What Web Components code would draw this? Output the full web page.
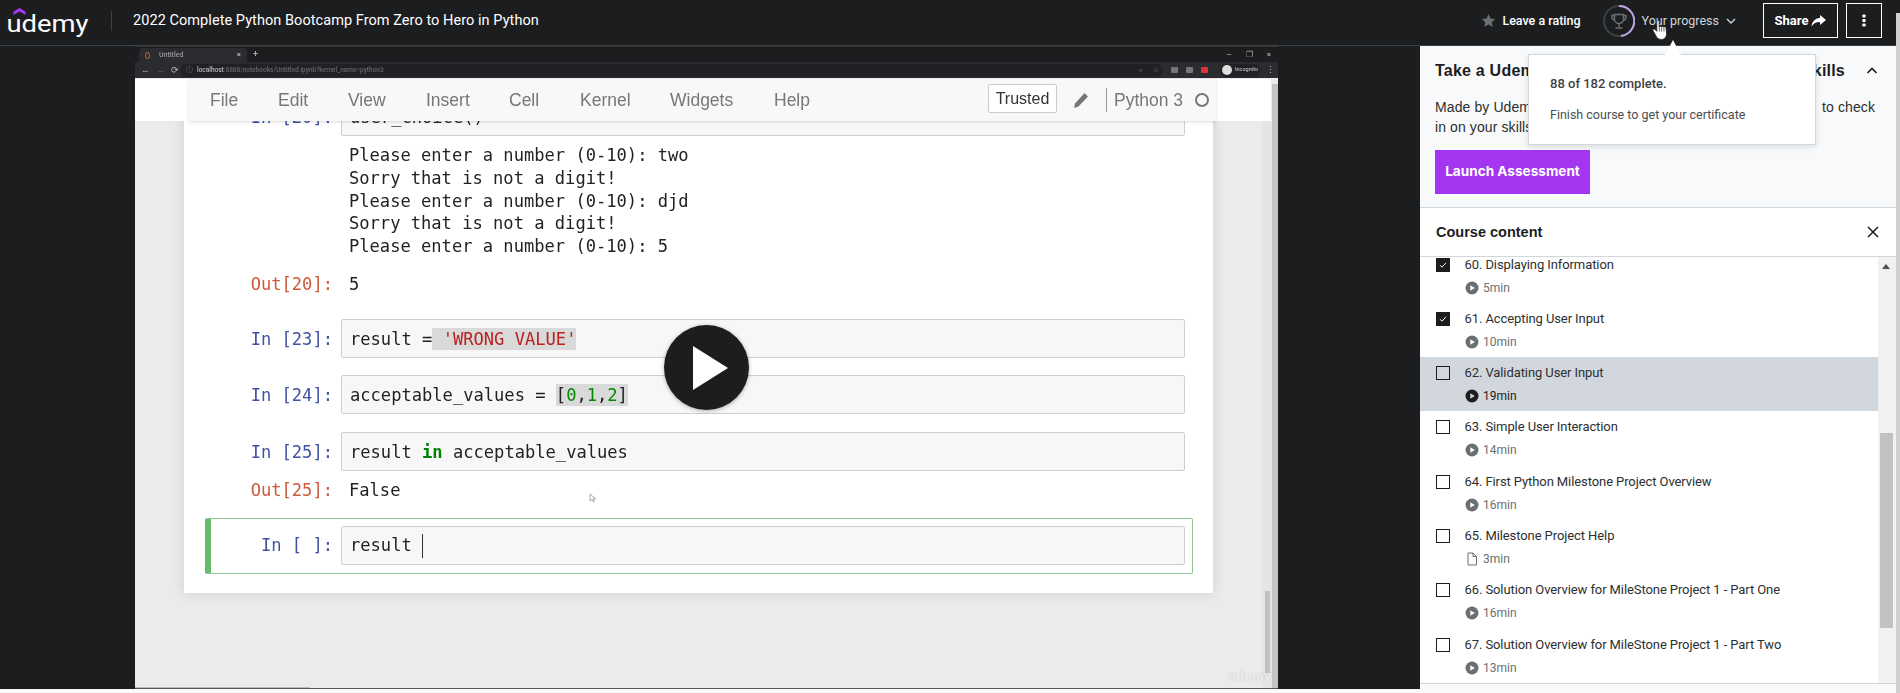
<!DOCTYPE html>
<html lang="en">
<head>
<meta charset="utf-8">
<title>Udemy course player</title>
<style>
  html,body{margin:0;height:693px;overflow:hidden;background:#fff}
  body{display:flex;flex-direction:column;font-family:Roboto,"Liberation Sans",sans-serif}
  .main{display:flex;height:647px}
</style>
</head>
<body>
<course-header></course-header>
<div class="main">
  <video-stage></video-stage>
  <course-sidebar></course-sidebar>
</div>
<hand-cursor></hand-cursor>
<script>
'use strict'
class CourseHeader extends HTMLElement {
  constructor () {
    super()
    this.attachShadow({mode:'open'})
    this.shadowRoot.innerHTML = `
    <style>
      :host{display:flex;align-items:center;height:41px;padding-bottom:4px;background:#1c1d1f;border-bottom:1px solid #3e4143;color:#fff;flex:none;position:relative;z-index:3;padding-right:18px}
      .logo{width:84px;height:36px;margin-left:6px;flex:none}
      .sep{width:1px;height:20px;background:#3e4143;margin-left:21px;margin-right:21px}
      h1{font:400 14.500px/20px Roboto,sans-serif;margin:0;letter-spacing:.06px;flex:1;white-space:nowrap}
      .rate{display:flex;align-items:center;font:500 12.500px/20px Roboto,sans-serif;margin-right:22px;gap:6px}
      .prog{display:flex;align-items:center;font:400 12.500px/20px Roboto,sans-serif;color:#d1d7dc;margin-right:26px;gap:7px}
      .btn{height:35px;box-sizing:border-box;border:1px solid #fff;display:flex;align-items:center;justify-content:center;font:700 13px Roboto,sans-serif;gap:3px}
      .share{width:75px;margin-right:8px}
      .more{width:36px}
      .edge{position:absolute;right:0;top:13px;bottom:-1px;width:4px;background:#d0d0d0}
    </style>
    <svg class="logo" viewBox="0 0 84 36">
      <path d="M7.500 5 L13.500 1.500 L19.500 5 V8.500 L13.500 5 L7.500 8.500 Z" fill="#a435f0" transform="translate(0 3.500)"/>
      <text x="0.500" y="29" font-family="Roboto,sans-serif" font-size="24" font-weight="400" fill="#fff" textLength="82" lengthAdjust="spacingAndGlyphs">udemy</text>
    </svg>
    <div class="sep"></div>
    <h1>2022 Complete Python Bootcamp From Zero to Hero in Python</h1>
    <div class="rate">
      <svg width="15" height="15" viewBox="0 0 24 24"><path fill="#6a6f73" d="M12 1.500l3.200 7.100 7.700.8-5.800 5.200 1.700 7.600-6.800-3.900-6.800 3.900 1.700-7.600L1.100 9.400l7.700-.8z"/></svg>
      <span>Leave a rating</span>
    </div>
    <div class="prog">
      <svg width="32" height="32" viewBox="0 0 32 32">
        <circle cx="16" cy="16" r="15" fill="none" stroke="#3e4143" stroke-width="2"/>
        <path d="M16 1 A15 15 0 0 1 18 30.900" fill="none" stroke="#c0a6e8" stroke-width="2"/>
        <path d="M11.500 9.500h9v4.500a4.500 4.500 0 0 1-9 0zM16 18.500v3.500M12.500 23h7M11.500 10.500H9v1.800a3 3 0 0 0 3 3M20.500 10.500H23v1.800a3 3 0 0 1-3 3" fill="none" stroke="#6a6f73" stroke-width="1.500"/>
      </svg>
      <span>Your progress</span>
      <svg width="12" height="12" viewBox="0 0 12 12" style="margin-left:-1px"><path d="M2 4l4 4 4-4" fill="none" stroke="#d1d7dc" stroke-width="1.300"/></svg>
    </div>
    <div class="btn share"><span>Share</span>
      <svg width="15" height="12" viewBox="0 0 15 12"><path fill="#fff" d="M9 0l6 5-6 5V7C5 7 2.500 8.200 .5 11.500 1 7 3.500 3.300 9 3z"/></svg>
    </div>
    <div class="btn more">
      <svg width="4" height="13" viewBox="0 0 4 13"><rect x=".4" y=".4" width="3.200" height="3.200" rx=".8" fill="#fff"/><rect x=".4" y="4.900" width="3.200" height="3.200" rx=".8" fill="#fff"/><rect x=".4" y="9.400" width="3.200" height="3.200" rx=".8" fill="#fff"/></svg>
    </div>
    <div class="edge"></div>
    <progress-popover></progress-popover>`
  }
}

class ProgressPopover extends HTMLElement {
  constructor () {
    super()
    this.attachShadow({mode:'open'})
    this.shadowRoot.innerHTML = `
    <style>
      :host{position:absolute;left:1528px;top:54px;width:288px;height:91px;box-sizing:border-box;background:#fff;border:1px solid #d1d7dc;box-shadow:0 2px 6px rgba(0,0,0,.12);color:#2d2f31;padding:20px 21px}
      :host::before{content:"";position:absolute;left:136px;top:-15px;width:16px;height:15px;background:#fff;clip-path:polygon(50% 0,100% 100%,0 100%)}
      b{display:block;font:500 13px/18px Roboto,sans-serif;position:relative;color:#3e4143}
      p{margin:13px 0 0;font:400 12.500px/18px Roboto,sans-serif;color:#4a4d50}
    </style>
    <b>88 of 182 complete.</b>
    <p>Finish course to get your certificate</p>`
  }
}

class VideoStage extends HTMLElement {
  constructor () {
    super()
    this.attachShadow({mode:'open'})
    this.shadowRoot.innerHTML = `
    <style>
      :host{display:flex;flex-direction:column;width:1420px;background:#1c1d1f;flex:none;position:relative}
      .frame{margin:0 142px 0 135px;height:642px;display:flex;flex-direction:column;position:relative;overflow:hidden;border-bottom:1px solid #555;box-sizing:content-box}
      .strip{height:4px;background:#fafafa;flex:none}
      .seek{position:absolute;left:0;bottom:0;width:175px;height:1px;background:#bbb}
      .play{position:absolute;left:529px;top:279px;width:85px;height:85px;border-radius:50%;background:#1c1d1f;box-shadow:0 1px 4px rgba(0,0,0,.3);z-index:4}
      .play svg{position:absolute;left:29px;top:21px}
      .mark{position:absolute;right:7px;bottom:4px;font:700 14px Roboto,sans-serif;color:rgba(255,255,255,.8);text-shadow:0 0 1px #aaa;z-index:4}
    </style>
    <div class="frame">
      <browser-chrome></browser-chrome>
      <jupyter-page></jupyter-page>
      <div class="seek"></div>
      <div class="play"><svg width="36" height="44" viewBox="0 0 36 44"><path d="M0 0L35 22 0 44z" fill="#fff"/></svg></div>
      <span class="mark">udemy</span>
    </div>
    <div class="strip"></div>`
  }
}

class BrowserChrome extends HTMLElement {
  constructor () {
    super()
    this.attachShadow({mode:'open'})
    this.shadowRoot.innerHTML = `
    <style>
      :host{display:block;flex:none;filter:blur(.6px);font:500 7px/1 Roboto,sans-serif;color:#999}
      .tabs{height:16px;background:#1c1d1f;display:flex;align-items:flex-end;padding-left:4px;border-top:1px solid #333;box-sizing:border-box}
      .tab{width:108px;height:14px;background:#2b2c2f;border-radius:4px 4px 0 0;display:flex;align-items:center;gap:9px;padding-left:6px;box-sizing:border-box}
      .dot{width:5px;height:7px;border-radius:50%;border:1px solid #a8603a;box-sizing:border-box}
      .t{flex:1}.x{margin-right:6px;font-size:8px;color:#bbb}
      .plus{margin:0 0 3px 6px;font-size:9px;color:#aaa}
      .ctl{margin-left:auto;display:flex;gap:14px;padding-right:7px;margin-bottom:3px;font-size:8px;color:#aaa}
      .bar{height:16px;background:#2b2c2f;display:flex;align-items:center;padding:0 6px;gap:6px;font-size:9px;color:#bbb}
      .pill{flex:none;width:983px;height:13px;border-radius:7px;background:#202124;display:flex;align-items:center;padding:0 4px 0 6px;gap:4px;margin-left:-5px;font-size:6.500px;color:#666;box-sizing:border-box}
      .pill b{color:#bbb;font-weight:500}
      .pill em{font-style:normal;color:#888;font-size:7px}
      .pill em:first-of-type{margin-left:auto;margin-right:6px}
      .inc{height:13px;border-radius:7px;background:#202124;display:flex;align-items:center;gap:3px;padding:0 5px 0 2px;font-size:5.500px;margin-left:6px;width:40px;box-sizing:border-box}
      .av{width:10px;height:10px;border-radius:50%;background:#ddd;flex:none}
      .i{width:7px;height:6px;border-radius:1px;background:#777;margin-left:2px;flex:none}
      .r{background:#d33}
    </style>
    <div class="tabs">
      <div class="tab"><i class="dot"></i><span class="t">Untitled</span><span class="x">×</span></div>
      <span class="plus">+</span>
      <div class="ctl"><span>–</span><span>❐</span><span>×</span></div>
    </div>
    <div class="bar">
      <span>←</span><span style="color:#666">→</span><span>⟳</span>
      <div class="pill"><span>ⓘ</span><span><b>localhost</b>:8888/notebooks/Untitled.ipynb?kernel_name=python3</span><em>⌕</em><em>☆</em></div>
      <i class="i"></i><i class="i"></i><i class="i r"></i>
      <div class="inc"><i class="av"></i><span>Incognito</span></div>
      <span>⋮</span>
    </div>`
  }
}

class JupyterPage extends HTMLElement {
  constructor () {
    super()
    this.attachShadow({mode:'open'})
    this.shadowRoot.innerHTML = `
    <style>
      :host{display:flex;flex-direction:column;flex:1;min-height:0;background:#ebebeb;position:relative;filter:blur(.5px);overflow:hidden}
      .menu{height:42px;margin-top:1px;background:#fff;flex:none;position:relative;z-index:2;display:flex;padding:0 55px 0 54px;margin-right:7px}
      .inner{flex:1;background:#f8f8f8;box-shadow:0 1px 3px rgba(0,0,0,.14);display:flex;align-items:center;font:400 17.500px "Liberation Sans",sans-serif;color:#777;position:relative}
      .inner span.m{position:absolute}
      .trusted{position:absolute;left:799px;top:5px;width:69px;height:29px;box-sizing:border-box;border:1px solid #ccc;background:#fff;border-radius:2px;font-size:16px;color:#333;display:flex;align-items:center;justify-content:center}
      .pen{position:absolute;left:884px;top:13px}
      .div{position:absolute;left:917px;top:9px;width:1px;height:24px;background:#999}
      .kern{position:absolute;left:925px;top:11px}
      .ring{position:absolute;left:1006px;top:14px;width:14px;height:14px;border:2px solid #777;border-radius:50%;box-sizing:border-box}
      .scroll{position:absolute;right:0;top:6px;bottom:0;width:6px;background:#c4c4c4}
      .inner-s{position:absolute;right:8px;bottom:15px;width:5px;height:82px;background:#c0c0c0}
      .sh{position:absolute;right:6px;top:43px;bottom:0;width:10px;background:#e4e4e4}
      .page{width:1029px;margin:-24px 0 0 49px;height:496px;box-sizing:border-box;flex:none;background:#fff;box-shadow:0 0 12px rgba(0,0,0,.12);position:relative;z-index:1}
      .r{display:grid;grid-template-columns:149px 844px;column-gap:8px}
      .p{font:17.100px/22.750px "DejaVu Sans Mono",monospace;text-align:right;white-space:pre;align-self:center}
      .in{color:#3f51a0;padding-top:2px}.out{color:#cc5a3a}
      .box{height:39px;box-sizing:border-box;border:1px solid #cfcfcf;background:#f7f7f7;border-radius:2px;display:flex;align-items:center;padding:1px 0 0 8px;font:17.100px/22.750px "DejaVu Sans Mono",monospace;color:#222;white-space:pre}
      .txt{font:17.100px/22.750px "DejaVu Sans Mono",monospace;color:#222;white-space:pre;padding-left:8px}
      .hl{background:#d9d9d9}
      .s{color:#ba2121}.n{color:#080}.k{color:#008000;font-weight:700}
      .sel{margin:0 20px 0 21px;height:56px;box-sizing:border-box;border:1px solid #8fc493;border-left:6px solid #66bb6a;border-radius:2px;display:grid;grid-template-columns:122px 844px;column-gap:8px;align-items:center}
      .sel .in,.sel .box{padding-top:0}
      .cur{display:inline-block;width:1.500px;height:24px;background:#333;margin-left:10px}
      .arrow{position:absolute;left:405px;top:396px}
    </style>
    <div class="menu"><div class="inner">
      <span class="m" style="left:21px">File</span><span class="m" style="left:89px">Edit</span><span class="m" style="left:159px">View</span><span class="m" style="left:237px">Insert</span><span class="m" style="left:320px">Cell</span><span class="m" style="left:391px">Kernel</span><span class="m" style="left:481px">Widgets</span><span class="m" style="left:585px">Help</span>
      <div class="trusted">Trusted</div>
      <svg class="pen" width="16" height="17" viewBox="0 0 16 17"><path fill="#777" d="M11.500 1l3.500 3.500-9.500 10L1 16l1-4.500z"/></svg>
      <div class="div"></div><span class="kern">Python 3</span><div class="ring"></div>
    </div></div>
    <div class="scroll"></div><div class="sh"></div><div class="inner-s"></div>
    <div class="page">
      <div class="r"><div class="p in">In [20]:</div><div class="box">user_choice()</div></div>
      <div class="r" style="margin-top:8px"><div></div><div class="txt">Please enter a number (0-10): two
Sorry that is not a digit!
Please enter a number (0-10): djd
Sorry that is not a digit!
Please enter a number (0-10): 5</div></div>
      <div class="r" style="margin-top:15px"><div class="p out">Out[20]:</div><div class="txt">5</div></div>
      <div class="r" style="margin-top:23.500px"><div class="p in">In [23]:</div><div class="box"><span>result =</span><span class="hl"> <span class="s">'WRONG VALUE'</span></span></div></div>
      <div class="r" style="margin-top:17px"><div class="p in">In [24]:</div><div class="box"><span>acceptable_values = </span><span class="hl">[<span class="n">0</span>,<span class="n">1</span>,<span class="n">2</span>]</span></div></div>
      <div class="r" style="margin-top:18px"><div class="p in">In [25]:</div><div class="box">result <span class="k">in</span> acceptable_values</div></div>
      <div class="r" style="margin-top:8px"><div class="p out">Out[25]:</div><div class="txt">False</div></div>
      <div class="sel" style="margin-top:16px"><div class="p in">In [ ]:</div><div class="box">result<i class="cur"></i></div></div>
      <svg class="arrow" width="7" height="10" viewBox="0 0 7 10"><path d="M1 1v7l2-1.600 1.500 2.600 1-.6L4 5.800h2.500z" fill="#fff" stroke="#888" stroke-width=".7"/></svg>
    </div>`
  }
}

class CourseSidebar extends HTMLElement {
  constructor () {
    super()
    this.attachShadow({mode:'open'})
    this.shadowRoot.innerHTML = `
    <style>
      :host{display:flex;flex-direction:column;width:480px;height:647px;background:#fff;box-sizing:border-box;border-right:4px solid #d0d0d0;flex:none;color:#1c1d1f;position:relative}
      .assess{height:162px;background:#f7f9fa;box-sizing:border-box;padding:14px 15px;border-bottom:1px solid #d1d7dc;position:relative;flex:none}
      .line{display:flex;justify-content:space-between;width:440px}
      .line .l{width:93px;overflow:hidden;white-space:nowrap}
      .line .rt{white-space:nowrap}
      h2.line{margin:0;font:700 16px/22px "Liberation Sans",sans-serif;letter-spacing:.22px;width:410px}
      .hide{width:29px;overflow:hidden;display:flex;justify-content:flex-end}
      .up{position:absolute;right:17px;top:20px}
      .assess p{margin:15px 0 0;font:400 14px/20px "Liberation Sans",sans-serif;color:#2d2f31;letter-spacing:.1px}
      .launch{margin-top:13px;width:155px;height:44px;background:#a435f0;color:#fff;font:700 13.600px/43px Inter,sans-serif;text-align:center}
      .cc{height:49px;flex:none;display:flex;align-items:center;justify-content:space-between;padding:0 16px;border-bottom:1px solid #d1d7dc;font:700 14.500px "Liberation Sans",sans-serif;box-sizing:border-box}
      .list{flex:1;min-height:0;display:flex;position:relative}
      .rows{flex:1;overflow:hidden;display:flex;flex-direction:column;min-width:0}
      .first{margin-top:-8px}
      .next{margin-top:1px}
      .sb{width:18px;background:#f1f1f1;position:relative;flex:none}
      .sb i{position:absolute;left:4px;top:7px;border:4.500px solid transparent;border-top:0;border-bottom:5px solid #505050}
      .sb b{position:absolute;left:2px;top:176px;width:13px;height:195px;background:#c1c1c1}
      .foot{height:10px;flex:none;background:#f7f9fa;border-top:1px solid #d1d7dc;box-sizing:border-box}
    </style>
    <section class="assess">
      <h2 class="line"><span class="l">Take a Udemy</span><span class="rt hide">skills</span></h2>
      <svg class="up" width="14" height="10" viewBox="0 0 14 10"><path d="M2.500 7L7 2.500 11.500 7" fill="none" stroke="#1c1d1f" stroke-width="1.600"/></svg>
      <p><span class="line"><span class="l">Made by Udemy</span><span class="rt">to check</span></span><span class="line"><span class="l">in on your skills</span></span></p>
      <div class="launch">Launch Assessment</div>
    </section>
    <div class="cc"><span>Course content</span>
      <svg width="14" height="14" viewBox="0 0 14 14"><path d="M2 2l10 10M12 2L2 12" stroke="#1c1d1f" stroke-width="1.500"/></svg>
    </div>
    <div class="list">
      <div class="rows">
        <lecture-row class="first" done title-text="60. Displaying Information" time="5min"></lecture-row>
        <lecture-row done title-text="61. Accepting User Input" time="10min"></lecture-row>
        <lecture-row active title-text="62. Validating User Input" time="19min"></lecture-row>
        <lecture-row title-text="63. Simple User Interaction" time="14min"></lecture-row>
        <lecture-row class="next" title-text="64. First Python Milestone Project Overview" time="16min"></lecture-row>
        <lecture-row doc title-text="65. Milestone Project Help" time="3min"></lecture-row>
        <lecture-row title-text="66. Solution Overview for MileStone Project 1 - Part One" time="16min"></lecture-row>
        <lecture-row title-text="67. Solution Overview for MileStone Project 1 - Part Two" time="13min" style="padding-top:10px"></lecture-row>
      </div>
      <div class="sb"><i></i><b></b></div>
    </div>
    <div class="foot"></div>`
  }
}

class LectureRow extends HTMLElement {
  constructor () {
    super()
    this.attachShadow({mode:'open'})
  }
  connectedCallback(){
    const done = this.hasAttribute('done')
    const active = this.hasAttribute('active')
    const iconColor = active ? '#1c1d1f' : '#6a6f73'
    const icon = this.hasAttribute('doc')
      ? `<svg width="14" height="14" viewBox="0 0 14 14"><path d="M3 1h5l3.500 3.500V13H3zM8 1v3.500h3.500" fill="none" stroke="${iconColor}" stroke-width="1"/></svg>`
      : `<svg width="14" height="14" viewBox="0 0 14 14"><circle cx="7" cy="7" r="6.500" fill="${iconColor}"/><path d="M5.300 4.200L9.800 7 5.300 9.800z" fill="${active ? '#d1d7dc' : '#fff'}"/></svg>`
    const check = done ? `<svg width="10" height="10" viewBox="0 0 10 10"><path d="M2 5.200l2 2 4-4.400" fill="none" stroke="#fff" stroke-width="1"/></svg>` : ''
    this.shadowRoot.innerHTML = `
    <style>
      :host{display:grid;flex:none;grid-template-columns:14px 1fr;column-gap:14.500px;height:54px;padding:9px 0 0 16px;box-sizing:border-box;background:${active ? '#d1d7dc' : '#fff'};color:#2d2f31}
      .cb{width:14px;height:14px;box-sizing:border-box;border:1px solid #1c1d1f;background:${done ? '#1c1d1f' : (active ? 'transparent' : '#fff')};display:flex;align-items:center;justify-content:center}
      .t{font:400 13px/16px Roboto,sans-serif;letter-spacing:-.09px;white-space:nowrap;margin-top:-1px}
      .d{display:flex;align-items:center;gap:4.500px;margin-top:7px;font:400 12px/16px Roboto,sans-serif;color:${active ? '#1c1d1f' : '#6a6f73'}}
    </style>
    <div class="cb">${check}</div>
    <div><div class="t">${this.getAttribute('title-text')}</div><div class="d">${icon}<span>${this.getAttribute('time')}</span></div></div>`
  }
}

class HandCursor extends HTMLElement {
  constructor () {
    super()
    this.attachShadow({mode:'open'})
    this.shadowRoot.innerHTML = `
    <style>:host{position:absolute;left:1652px;top:19px;z-index:9;width:18px;height:22px}</style>
    <svg width="18" height="22" viewBox="0 0 18 22"><path d="M5 1.500c1-.8 2.200-.2 2.200 1V8c.3-1 2-1 2.300 0 .4-.9 2-.8 2.300.2.500-.8 2-.6 2.200.4l.5 6.400c0 3-2 5.500-5 5.500-3 0-4.500-1.500-5.500-3.500L1 11.500c-.6-1.200.8-2.200 1.800-1.200l2 2V2.500z" fill="#fff" stroke="#222" stroke-width=".8"/><path d="M7.300 8v4.500M9.600 8.200v4.300M11.900 8.500v4" stroke="#222" stroke-width=".7"/></svg>`
  }
}

customElements.define('progress-popover',ProgressPopover)
customElements.define('course-header',CourseHeader)
customElements.define('browser-chrome',BrowserChrome)
customElements.define('jupyter-page',JupyterPage)
customElements.define('video-stage',VideoStage)
customElements.define('lecture-row',LectureRow)
customElements.define('course-sidebar',CourseSidebar)
customElements.define('hand-cursor',HandCursor)
</script>
</body>
</html>
